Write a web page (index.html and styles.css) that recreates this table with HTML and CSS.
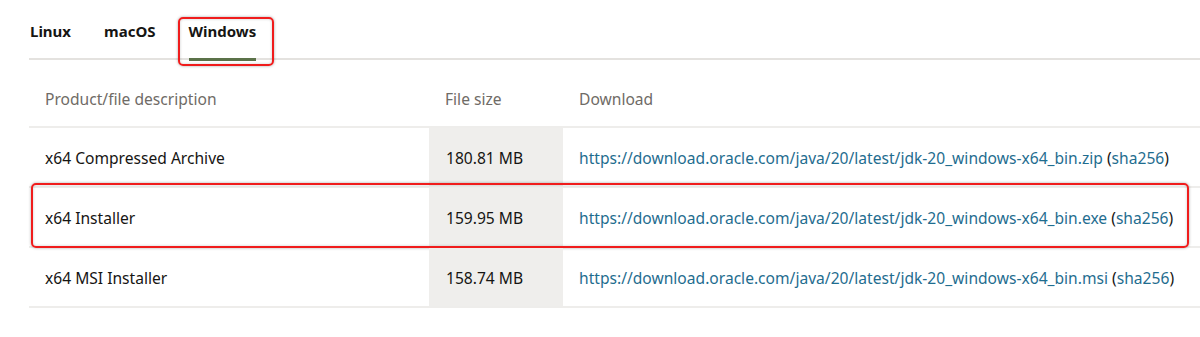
FILE: index.html
```html
<!DOCTYPE html>
<html>
<head>
    <title>JDK 20 Downloads</title>
    <link rel="stylesheet" href="styles.css">
</head>
<body>
    <div class="page">
        <!-- OS tabs -->
        <div class="tabs">
            <div class="tab">Linux</div>
            <div class="tab">macOS</div>
            <div class="tab active marked">Windows</div>
        </div>

        <!-- Downloads table -->
        <div class="downloads">
            <div class="row head">
                <div class="cell">Product/file description</div>
                <div class="cell">File size</div>
                <div class="cell">Download</div>
            </div>
            <div class="row">
                <div class="cell">x64 Compressed Archive</div>
                <div class="cell size">180.81 MB</div>
                <div class="cell"><span><a href="#">https://download.oracle.com/java/20/latest/jdk-20_windows-x64_bin.zip</a> (<a href="#">sha256</a>)</span></div>
            </div>
            <div class="row marked">
                <div class="cell">x64 Installer</div>
                <div class="cell size">159.95 MB</div>
                <div class="cell"><span><a href="#">https://download.oracle.com/java/20/latest/jdk-20_windows-x64_bin.exe</a> (<a href="#">sha256</a>)</span></div>
            </div>
            <div class="row">
                <div class="cell">x64 MSI Installer</div>
                <div class="cell size">158.74 MB</div>
                <div class="cell"><span><a href="#">https://download.oracle.com/java/20/latest/jdk-20_windows-x64_bin.msi</a> (<a href="#">sha256</a>)</span></div>
            </div>
        </div>
    </div>
</body>
</html>
```

FILE: styles.css
```css
body {
    margin: 0;
    background: #fff;
    font-family: "Noto Sans", Arial, sans-serif;
    font-size: 15.6px;
    color: #161513;
}
.page {
    padding-left: 29px;
}
.tabs {
    display: flex;
    gap: 33px;
    height: 58px;
    border-bottom: 2px solid #e4e2df;
    padding-left: 1px;
    font-size: 15px;
}
.tab {
    position: relative;
    font-weight: bold;
    padding-top: 21px;
    box-sizing: border-box;
    height: 61px;
}
.tab.active {
    border-bottom: 3px solid #5b7249;
}
.marked::after {
    content: "";
    position: absolute;
    border: 2px solid #f01c1c;
    border-radius: 5px;
    box-shadow: 0 0 3px rgba(0, 0, 0, 0.35), inset 0 0 3px rgba(0, 0, 0, 0.2);
    pointer-events: none;
}
.tab.marked::after {
    left: -11px;
    right: -18px;
    top: 17px;
    bottom: -8px;
}
.downloads {
    width: 1171px;
}
.row {
    position: relative;
    display: grid;
    grid-template-columns: 400px 134px 1fr;
    height: 58px;
    border-bottom: 2px solid #eeedeb;
}
.row.head {
    height: 66px;
    color: #6f6b66;
}
.row.head .cell {
    padding-top: 11px;
}
.cell {
    display: flex;
    align-items: center;
    padding-left: 16px;
    padding-top: 1px;
}
.size {
    background: #efeeec;
    padding-left: 17px;
}
.row.marked::after {
    left: 2px;
    right: 11px;
    top: -5px;
    bottom: -2px;
}
a {
    color: #1f6d8f;
    text-decoration: none;
}
```
